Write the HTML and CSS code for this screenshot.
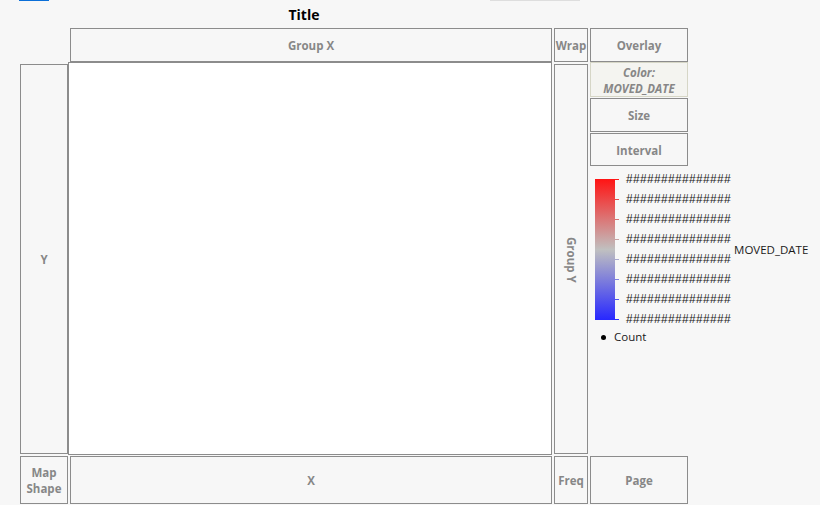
FILE: index.html
```html
<!DOCTYPE html>
<html lang="en">
<head>
  <meta charset="UTF-8">
  <title>Graph Builder</title>
  <link rel="stylesheet" href="styles.css">
</head>
<body>
  <div class="marks">
    <div class="tab-mark"></div>
    <div class="scroll-mark"></div>
  </div>

  <div class="builder">
    <div class="title">Title</div>

    <div class="zone group-x">Group X</div>
    <div class="zone wrap">Wrap</div>
    <div class="zone overlay">Overlay</div>

    <div class="zone y-zone">Y</div>
    <div class="plot"></div>
    <div class="zone group-y"><span>Group Y</span></div>

    <div class="side">
      <div class="zone color-zone">Color:<br>MOVED_DATE</div>
      <div class="zone size-zone">Size</div>
      <div class="zone interval-zone">Interval</div>

      <div class="legend">
        <div class="scale-bar"></div>
        <div class="scale-rows">
          <div class="scale-row"><span class="tick" style="background:#ff1a1a"></span><span class="lbl">###############</span></div>
          <div class="scale-row"><span class="tick" style="background:#e84a4a"></span><span class="lbl">###############</span></div>
          <div class="scale-row"><span class="tick" style="background:#d87272"></span><span class="lbl">###############</span></div>
          <div class="scale-row"><span class="tick" style="background:#c9a2a2"></span><span class="lbl">###############</span></div>
          <div class="scale-row"><span class="tick" style="background:#a9a9d0"></span><span class="lbl">###############</span></div>
          <div class="scale-row"><span class="tick" style="background:#8282e2"></span><span class="lbl">###############</span></div>
          <div class="scale-row"><span class="tick" style="background:#5656f0"></span><span class="lbl">###############</span></div>
          <div class="scale-row"><span class="tick" style="background:#2b2bff"></span><span class="lbl">###############</span></div>
        </div>
        <div class="legend-title">MOVED_DATE</div>
      </div>
      <div class="count"><span class="dot"></span>Count</div>
    </div>

    <div class="zone map-shape">Map<br>Shape</div>
    <div class="zone x-zone">X</div>
    <div class="zone freq">Freq</div>
    <div class="zone page">Page</div>
  </div>
</body>
</html>
```

FILE: styles.css
```css
body {
  margin: 0;
  background: #f7f7f7;
  font-family: "Open Sans", "Noto Sans", sans-serif;
  width: 820px;
  height: 505px;
  overflow: hidden;
}

.marks {
  display: flex;
  height: 1px;
}

.tab-mark {
  margin-left: 19px;
  width: 30px;
  height: 1px;
  background: #0b6fd8;
}

.scroll-mark {
  margin-left: 441px;
  width: 90px;
  height: 1px;
  background: #dedede;
}

.builder {
  display: grid;
  grid-template-columns: 48px 482px 34px 98px;
  grid-template-rows: 25px 34px 390px 48px;
  gap: 2px;
  margin-left: 20px;
}

.title {
  grid-column: 1 / 4;
  text-align: center;
  font-weight: bold;
  font-size: 14px;
  line-height: 16px;
  padding-top: 6px;
  color: #000;
}

.zone {
  border: 1px solid #8c8c8c;
  display: flex;
  align-items: center;
  justify-content: center;
  text-align: center;
  font-weight: bold;
  font-size: 11.5px;
  line-height: 16px;
  color: #878787;
  box-sizing: border-box;
  padding-top: 2px;
}

.group-x { grid-column: 2; grid-row: 2; }
.wrap { grid-column: 3; grid-row: 2; }
.overlay { grid-column: 4; grid-row: 2; }

.y-zone { grid-column: 1; grid-row: 3; }

.plot {
  grid-column: 2;
  grid-row: 3;
  background: #fff;
  border: 1px solid #8c8c8c;
  margin: -2px 0 -1px -2px;
}

.group-y {
  grid-column: 3;
  grid-row: 3;
}

.group-y span {
  writing-mode: vertical-rl;
}

.side {
  grid-column: 4;
  grid-row: 3;
  display: flex;
  flex-direction: column;
  margin-top: -2px;
}

.color-zone {
  height: 35px;
  flex: none;
  border-color: #d6d6c6;
  background: #f4f4f0;
  font-style: italic;
  margin-bottom: 1px;
}

.size-zone {
  height: 34px;
  flex: none;
  margin-bottom: 1px;
}

.interval-zone {
  height: 33px;
  flex: none;
}

.legend {
  display: flex;
  margin-top: 3px;
  padding-left: 5px;
  white-space: nowrap;
  width: 260px;
}

.scale-bar {
  flex: none;
  width: 20px;
  height: 141px;
  margin-top: 10px;
  background: linear-gradient(to bottom, #ff1414 0%, #c0c0c0 50%, #2727ff 100%);
}

.scale-rows {
  flex: none;
  display: flex;
  flex-direction: column;
}

.scale-row {
  height: 20px;
  display: flex;
  align-items: center;
}

.tick {
  flex: none;
  width: 4px;
  height: 1px;
}

.lbl {
  margin-left: 7px;
  font-family: "Liberation Sans", sans-serif;
  font-size: 12px;
  letter-spacing: 0.33px;
  color: #1a1a1a;
  line-height: 14px;
}

.legend-title {
  flex: none;
  align-self: center;
  margin-left: 3px;
  font-family: "Open Sans", sans-serif;
  font-size: 11.5px;
  color: #1a1a1a;
}

.count {
  display: flex;
  align-items: center;
  padding-left: 11px;
  margin-top: 1px;
  font-size: 11.5px;
  line-height: 14px;
  color: #1a1a1a;
}

.dot {
  flex: none;
  width: 5px;
  height: 5px;
  border-radius: 50%;
  background: #000;
  margin-right: 8px;
}

.map-shape { grid-column: 1; grid-row: 4; }
.x-zone { grid-column: 2; grid-row: 4; }
.freq { grid-column: 3; grid-row: 4; }
.page { grid-column: 4; grid-row: 4; }
```
